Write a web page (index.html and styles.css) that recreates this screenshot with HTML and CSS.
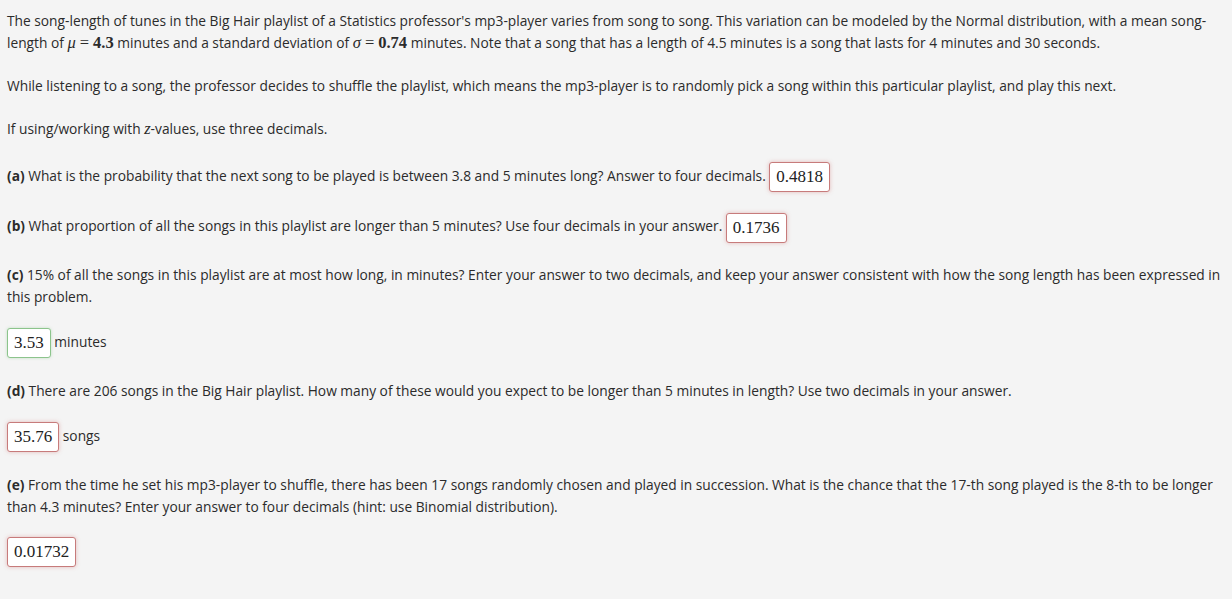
FILE: index.html
```html
<!DOCTYPE html>
<html>
<head>
<meta charset="utf-8">
<link rel="stylesheet" href="styles.css">
</head>
<body>
<div class="page">
  <p class="para">The song-length of tunes in the Big Hair playlist of a Statistics professor's mp3-player varies from song to song. This variation can be modeled by the Normal distribution, with a mean song-length of <span class="math"><i>μ</i><span class="op">=</span><b>4.3</b></span> minutes and a standard deviation of <span class="math"><i>σ</i><span class="op">=</span><b>0.74</b></span> minutes. Note that a song that has a length of 4.5 minutes is a song that lasts for 4 minutes and 30 seconds.</p>
  <p class="para">While listening to a song, the professor decides to shuffle the playlist, which means the mp3-player is to randomly pick a song within this particular playlist, and play this next.</p>
  <p class="para">If using/working with <span class="math"><i>z</i></span>-values, use three decimals.</p>
  <p class="q inline"><b>(a)</b> What is the probability that the next song to be played is between 3.8 and 5 minutes long? Answer to four decimals. <span class="ans wrong">0.4818</span></p>
  <p class="q inline last"><b>(b)</b> What proportion of all the songs in this playlist are longer than 5 minutes? Use four decimals in your answer. <span class="ans wrong">0.1736</span></p>
  <p class="q"><b>(c)</b> 15% of all the songs in this playlist are at most how long, in minutes? Enter your answer to two decimals, and keep your answer consistent with how the song length has been expressed in this problem.</p>
  <p class="answer-row"><span class="ans right">3.53</span> minutes</p>
  <p class="q single"><b>(d)</b> There are 206 songs in the Big Hair playlist. How many of these would you expect to be longer than 5 minutes in length? Use two decimals in your answer.</p>
  <p class="answer-row"><span class="ans wrong">35.76</span> songs</p>
  <p class="q tail"><b>(e)</b> From the time he set his mp3-player to shuffle, there has been 17 songs randomly chosen and played in succession. What is the chance that the 17-th song played is the 8-th to be longer than 4.3 minutes? Enter your answer to four decimals (hint: use Binomial distribution).</p>
  <p class="answer-row"><span class="ans wrong">0.01732</span></p>
</div>
</body>
</html>
```
FILE: styles.css
```css
html, body {
  margin: 0;
  padding: 0;
  background: #f4f4f4;
}
.page {
  padding: 10px 7px 0 7px;
  font-family: "Open Sans", "Noto Sans", sans-serif;
  font-size: 13.75px;
  line-height: 22px;
  color: #2b2b2b;
}
.para {
  margin: 0 0 21px 0;
}
.q {
  margin: 0 0 19px 0;
}
.q.single {
  margin-bottom: 19px;
}
.q.tail {
  margin-bottom: 17px;
}
.q b {
  font-weight: 700;
}
.inline {
  line-height: 30px;
}
.q.inline {
  margin-bottom: 19px;
}
.q.inline.last {
  margin-bottom: 21px;
}
.answer-row {
  margin: 0 0 22px 0;
  line-height: 30px;
}
.math {
  font-family: "Liberation Serif", "DejaVu Serif", serif;
  font-size: 16.5px;
}
.math i {
  font-style: italic;
}
.math .op {
  padding: 0 4px;
}
.math b {
  font-weight: 700;
}
.ans {
  display: inline-block;
  box-sizing: border-box;
  height: 30px;
  line-height: 28px;
  padding: 0 6px;
  background: #fff;
  border: 1px solid #c77b7b;
  border-radius: 3px;
  font-family: "Liberation Serif", "DejaVu Serif", serif;
  font-size: 17px;
  color: #222;
  vertical-align: middle;
  box-shadow: 0 0 4px rgba(200, 80, 80, 0.35);
}
.ans.right {
  border-color: #8cc48c;
  box-shadow: 0 0 3px rgba(100, 180, 100, 0.35);
}
```
